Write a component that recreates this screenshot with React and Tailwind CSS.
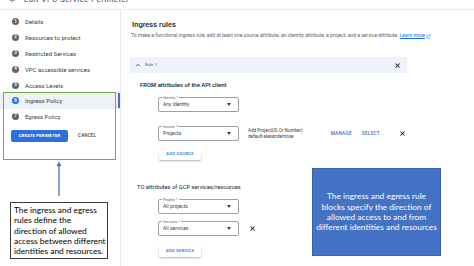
import React from 'react';
import { X, ArrowLeft } from 'lucide-react';

const steps = [
  'Details',
  'Resources to protect',
  'Restricted Services',
  'VPC accessible services',
  'Access Levels',
  'Ingress Policy',
  'Egress Policy',
];

const Select = ({ label, value }) => (
  <div className="relative w-[81px] h-[15px] border border-[#9aa0a6] rounded-[2px] flex items-center pl-[4px]">
    <span className="absolute -top-[3px] left-[3px] bg-white px-[1px] text-[3.8px] leading-[5px] text-[#5f6368]">
      {label}
    </span>
    <span className="text-[5px] text-[#3c4043]">{value}</span>
    <span className="ml-auto mr-[7px] w-0 h-0 border-l-[2.5px] border-r-[2.5px] border-t-[3px] border-l-transparent border-r-transparent border-t-[#3c4043]"></span>
  </div>
);

const FlatButton = ({ children }) => (
  <div className="w-[42px] h-[11px] bg-white rounded-[2px] shadow-[0_1px_2px_rgba(0,0,0,0.3)] flex items-center justify-center text-[4.3px] font-medium tracking-[0.2px] text-[#1a73e8]">
    {children}
  </div>
);

export default function App() {
  return (
    <div className="relative w-[474px] h-[266px] overflow-hidden bg-white [font-family:Roboto,'Liberation_Sans',sans-serif] text-[#3c4043]">
      {/* header, cut off at the top */}
      <div className="h-[10px] border-b border-[#e8eaed] overflow-hidden">
        <div className="flex items-center gap-[8px] pl-[9px] -mt-[5px]">
          <ArrowLeft size={7} strokeWidth={2} color="#5f6368" />
          <span className="text-[7.5px] leading-[10px] text-[#3c4043] tracking-[0.6px]">Edit VPC Service Perimeter</span>
        </div>
      </div>

      <div className="flex h-[256px]">
        {/* sidebar */}
        <div className="w-[121px] border-r border-[#e8eaed] pt-[4px]">
          {steps.map((s, i) => {
            const active = i === 5;
            return (
              <div
                key={s}
                className={`h-[15.8px] flex items-center gap-[6px] pl-[12px] ${active ? 'bg-[#eef1f7]' : ''}`}
              >
                <span
                  className={`w-[7px] h-[7px] rounded-full flex items-center justify-center text-[4.5px] font-bold text-white ${active ? 'bg-[#1a73e8]' : 'bg-[#5f6368]'}`}
                >
                  {i + 1}
                </span>
                <span className="text-[6px] text-[#3c4043]">{s}</span>
                {active && <span className="ml-auto w-[2px] h-[15px] bg-[#4a6fc1]"></span>}
              </div>
            );
          })}
          <div className="flex items-center gap-[10px] pl-[11px] mt-[5.5px]">
            <div className="w-[57px] h-[12px] rounded-[2px] bg-[#2f6fd9] flex items-center justify-center text-[4.3px] font-bold text-white tracking-[0.1px]">
              CREATE PERIMETER
            </div>
            <span className="text-[4.5px] font-medium text-[#3c4043] tracking-[0.2px]">CANCEL</span>
          </div>
        </div>

        {/* main panel */}
        <div className="flex-1 pl-[9px] flex flex-col">
          <div className="ml-[2px] mt-[10px] h-[10px] flex items-center text-[7.6px] font-medium text-[#202124]">
            Ingress rules
          </div>
          <div className="ml-[1px] mt-[3px] h-[6px] flex items-center text-[5px] text-[#5f6368] whitespace-nowrap">
            To make a functional ingress rule, add at least one source attribute, an identity attribute, a project, and a service attribute.&nbsp;
            <span className="text-[#1a73e8] underline">Learn more</span>
            <svg width="5" height="5" viewBox="0 0 24 24" className="ml-[1px]" fill="none" stroke="#1a73e8" strokeWidth="2.5">
              <path d="M14 4h6v6M20 4l-9 9M18 14v6H4V6h6" />
            </svg>
          </div>

          {/* rule bar */}
          <div className="mt-[18px] w-[277px] h-[16px] bg-[#eef2fa] flex items-center pl-[5px] pr-[6px]">
            <svg width="6" height="6" viewBox="0 0 24 24" fill="none" stroke="#3c4043" strokeWidth="3.5">
              <path d="M5 16l7-7 7 7" />
            </svg>
            <span className="ml-[4px] text-[4.3px] text-[#5f6368]">Rule 1</span>
            <X size={7} strokeWidth={3.5} color="#202124" className="ml-auto" />
          </div>

          <div className="ml-[10px] mt-[8px] h-[8px] flex items-center text-[5.9px] font-medium text-[#202124]">
            FROM attributes of the API client
          </div>

          <div className="ml-[28px] mt-[8px]">
            <Select label="Identity *" value="Any Identity" />
          </div>

          <div className="ml-[28px] mt-[14px] flex items-center">
            <Select label="Source *" value="Projects" />
            <div className="ml-[9px] flex flex-col text-[4.6px] leading-[5.5px] text-[#3c4043]">
              <span>Add Project(ID Or Number)</span>
              <span>default-alexanderhose</span>
            </div>
            <span className="ml-[28px] text-[4.8px] font-medium text-[#4a6fc1] tracking-[0.2px]">MANAGE</span>
            <span className="ml-[10px] text-[4.8px] font-medium text-[#4a6fc1] tracking-[0.2px]">SELECT</span>
            <X size={7} strokeWidth={3.5} color="#202124" className="ml-[19px]" />
          </div>

          <div className="ml-[29px] mt-[8px]">
            <FlatButton>ADD SOURCE</FlatButton>
          </div>

          <div className="ml-[7px] mt-[23px] h-[8px] flex items-center text-[5.8px] text-[#202124]">
            TO attributes of GCP services/resources
          </div>

          <div className="ml-[28px] mt-[8px]">
            <Select label="Project *" value="All projects" />
          </div>

          <div className="ml-[28px] mt-[7px] flex items-center">
            <Select label="Services *" value="All services" />
            <X size={7} strokeWidth={3.5} color="#202124" className="ml-[10px]" />
          </div>

          <div className="ml-[29px] mt-[10px]">
            <FlatButton>ADD SERVICE</FlatButton>
          </div>
        </div>
      </div>

      {/* annotations over the screenshot */}
      <div className="absolute left-[3px] top-[92px] w-[113px] h-[68px] border-[1.5px] border-[#70ad47]"></div>

      <svg className="absolute left-[54px] top-[160px]" width="10" height="38" viewBox="0 0 10 38">
        <line x1="5" y1="36" x2="5" y2="5" stroke="#4472c4" strokeWidth="1.3" />
        <path d="M2.5 6 L5 1.5 L7.5 6 Z" fill="#4472c4" />
      </svg>

      <div className="absolute left-[10px] top-[202px] w-[98px] h-[57px] border-[1.5px] border-[#3b3b3b] bg-white pl-[3px] pt-[2px] whitespace-nowrap [font-family:Lato,'Open_Sans',sans-serif] text-[8.4px] leading-[10.3px] text-black">
        The ingress and egress
        <br />
        rules define the
        <br />
        direction of allowed
        <br />
        access between different
        <br />
        identities and resources.
      </div>

      <div className="absolute left-[312px] top-[168px] w-[129px] h-[88px] bg-[#4472c4] border border-[#3a62a8] flex items-center justify-center text-center [font-family:Lato,'Open_Sans',sans-serif] text-[8.4px] leading-[10.3px] text-white">
        <div>
          The ingress and egress rule
          <br />
          blocks specify the direction of
          <br />
          allowed access to and from
          <br />
          different identities and resources
        </div>
      </div>
    </div>
  );
}
